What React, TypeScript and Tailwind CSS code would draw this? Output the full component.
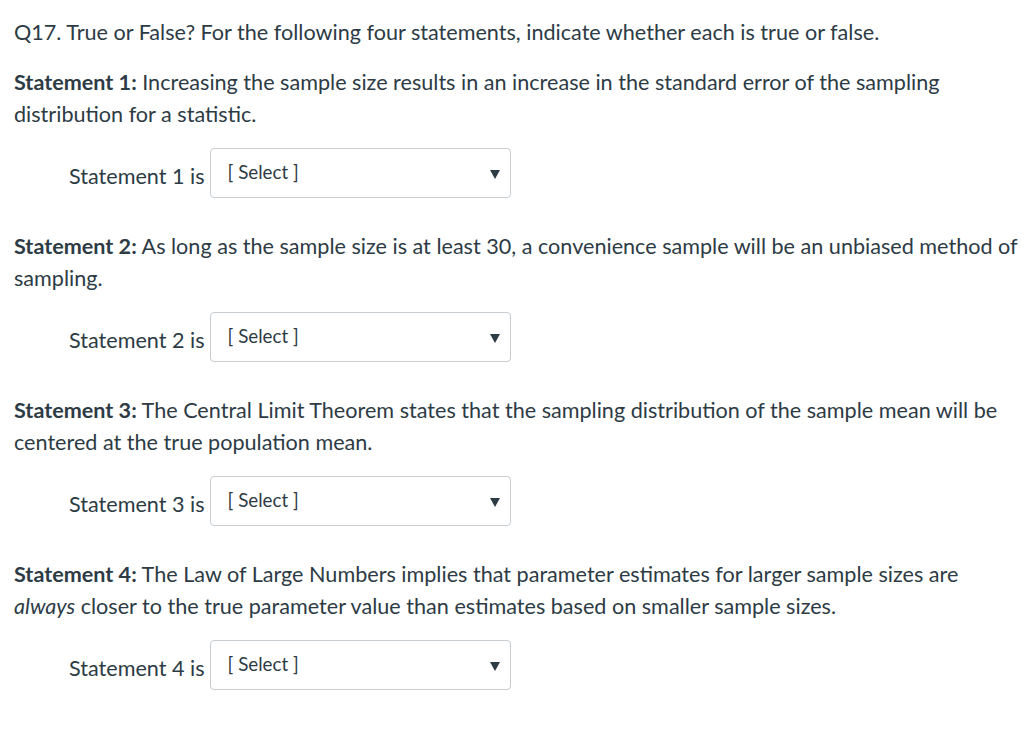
import React from "react";

const statements: { label: React.ReactNode; n: number }[] = [
  {
    n: 1,
    label: (
      <>
        <strong className="font-bold">Statement 1:</strong> Increasing the sample size results in an increase in the standard error of the sampling distribution for a statistic.
      </>
    ),
  },
  {
    n: 2,
    label: (
      <>
        <strong className="font-bold">Statement 2:</strong> As long as the sample size is at least 30, a convenience sample will be an unbiased method of sampling.
      </>
    ),
  },
  {
    n: 3,
    label: (
      <>
        <strong className="font-bold">Statement 3:</strong> The Central Limit Theorem states that the sampling distribution of the sample mean will be centered at the true population mean.
      </>
    ),
  },
  {
    n: 4,
    label: (
      <>
        <strong className="font-bold">Statement 4:</strong> The Law of Large Numbers implies that parameter estimates for larger sample sizes are <em className="italic">always</em> closer to the true parameter value than estimates based on smaller sample sizes.
      </>
    ),
  },
];

export default function App() {
  return (
    <div
      className="w-[1024px] h-[742px] overflow-hidden bg-white text-[#2d3b45] pl-[14px] pr-[4px] pt-[16px] text-[21.6px] leading-[32px]"
      style={{ fontFamily: "Lato, 'Open Sans', sans-serif" }}
    >
      <p>Q17. True or False? For the following four statements, indicate whether each is true or false.</p>
      {statements.map((s) => (
        <div key={s.n} className={s.n === 1 ? "mt-[18px]" : "mt-[32px]"}>
          <p>{s.label}</p>
          <div className="mt-[18px] flex items-center pl-[55px]">
            <span className="mr-[5px] pt-[6px]">Statement {s.n} is</span>
            <div className="relative flex h-[50px] w-[301px] shrink-0 items-center rounded-[4px] border border-[#c7cdd1] bg-white pl-[17px]">
              <span className="text-[18.8px] leading-none -mt-[2px]">[ Select ]</span>
              <svg
                className="absolute right-[10px] top-[21px]"
                width="10"
                height="9"
                viewBox="0 0 10 9"
              >
                <path d="M0 0 H10 L5 9 Z" fill="#2d3b45" />
              </svg>
            </div>
          </div>
        </div>
      ))}
    </div>
  );
}
